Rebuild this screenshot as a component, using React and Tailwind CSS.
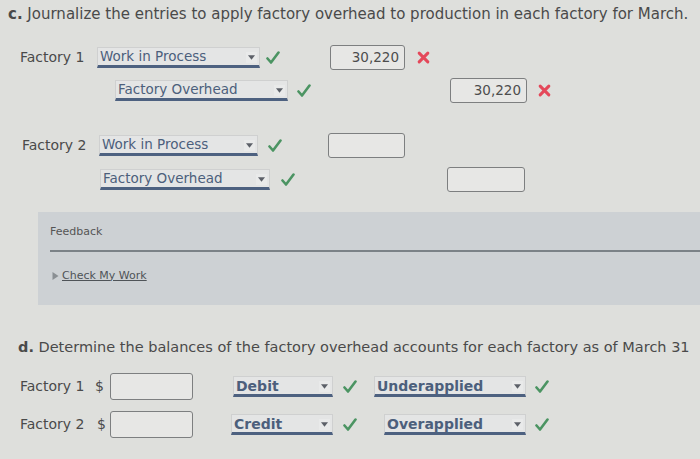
import React from 'react';

const font = "font-['DejaVu_Sans',Verdana,sans-serif]";

function Check({ className = '' }) {
  return (
    <svg viewBox="0 0 14 14" className={`w-[14px] h-[14px] shrink-0 ${className}`}>
      <path d="M1.5 7.5 L5 11.5 L12.5 1.5" fill="none" stroke="#4b9462" strokeWidth="2.6" strokeLinecap="round" strokeLinejoin="round" />
    </svg>
  );
}

function Cross({ className = '' }) {
  return (
    <svg viewBox="0 0 12 12" className={`w-[13px] h-[13px] shrink-0 ${className}`}>
      <path d="M2 2 L10 10 M10 2 L2 10" stroke="#e4485a" strokeWidth="2.8" strokeLinecap="round" />
    </svg>
  );
}

function Dropdown({ label, className = '', bold = false }) {
  return (
    <div className={`relative h-[21px] shrink-0 flex items-center bg-[#e4e5e5] border border-[#cfd0d0] border-b-[3px] border-b-[#4d6180] ${className}`}>
      <span className={`pl-[2px] leading-none text-[#4c5f7c] ${bold ? 'font-bold text-[14px]' : 'text-[13.5px]'}`}>{label}</span>
      <span className="absolute right-[2px] top-[4px] w-[11px] h-[11px] bg-[#e9eaea] flex items-center justify-center">
        <svg viewBox="0 0 8 5" className="w-[7px] h-[5px]">
          <path d="M0 0 L8 0 L4 5 Z" fill="#5c6068" />
        </svg>
      </span>
    </div>
  );
}

function Box({ value, className = '' }) {
  return (
    <div className={`h-[25px] shrink-0 border-[1.5px] border-[#7d7f80] rounded-[3px] bg-[#e7e7e5] flex items-center justify-end pr-[5px] text-[13.5px] text-[#4d4d4d] ${className}`}>
      {value}
    </div>
  );
}

export default function App() {
  return (
    <div className={`w-[700px] h-[459px] overflow-hidden bg-[#dedfdc] text-[#4a4a4a] ${font}`}>
      {/* part c */}
      <div className="h-[26px] pl-[8px] pt-[3px] text-[15px] whitespace-nowrap">
        <b>c.</b> Journalize the entries to apply factory overhead to production in each factory for March.
      </div>

      <div className="mt-[19px] h-[25px] flex items-center pl-[20px] text-[14px]">
        <span className="w-[77px] shrink-0">Factory 1</span>
        <Dropdown label="Work in Process" className="w-[163px]" />
        <Check className="ml-[6px]" />
        <Box value="30,220" className="ml-[50px] w-[75px]" />
        <Cross className="ml-[12px]" />
      </div>

      <div className="mt-[8px] h-[25px] flex items-center pl-[115px]">
        <Dropdown label="Factory Overhead" className="w-[173px]" />
        <Check className="ml-[9px]" />
        <Box value="30,220" className="ml-[139px] w-[77px]" />
        <Cross className="ml-[11px]" />
      </div>

      <div className="mt-[30px] h-[25px] flex items-center pl-[22px] text-[14px]">
        <span className="w-[77px] shrink-0">Factory 2</span>
        <Dropdown label="Work in Process" className="w-[159px]" />
        <Check className="ml-[10px]" />
        <Box className="ml-[46px] w-[77px]" />
      </div>

      <div className="mt-[9px] h-[25px] flex items-center pl-[100px]">
        <Dropdown label="Factory Overhead" className="w-[170px]" />
        <Check className="ml-[11px]" />
        <Box className="ml-[152px] w-[78px]" />
      </div>

      {/* feedback */}
      <div className="mt-[20px] ml-[38px] h-[93px] bg-[#cdd1d4] pl-[12px]">
        <div className="h-[38px] pt-[12px] text-[11px] text-[#555]">Feedback</div>
        <div className="h-[1.5px] bg-[#7b8287]" />
        <div className="mt-[16px] flex items-center text-[11px] text-[#4f5458]">
          <svg viewBox="0 0 6 8" className="w-[7px] h-[8px] ml-[2px] mr-[3px]">
            <path d="M0 0 L6 4 L0 8 Z" fill="#8a8f93" />
          </svg>
          <span className="underline">Check My Work</span>
        </div>
      </div>

      {/* part d */}
      <div className="mt-[31px] h-[24px] pl-[18px] flex items-center text-[14.5px] whitespace-nowrap">
        <b>d.</b>&nbsp;Determine the balances of the factory overhead accounts for each factory as of March 31
      </div>

      <div className="mt-[13px] h-[27px] flex items-center pl-[20px] text-[14px]">
        <span className="w-[75px] shrink-0">Factory 1</span>
        <span className="w-[15px] shrink-0">$</span>
        <Box className="w-[83px] h-[27px]" />
        <Dropdown label="Debit" bold className="ml-[40px] w-[100px]" />
        <Check className="ml-[10px]" />
        <Dropdown label="Underapplied" bold className="ml-[17px] w-[152px]" />
        <Check className="ml-[9px]" />
      </div>

      <div className="mt-[11px] h-[27px] flex items-center pl-[20px] text-[14px]">
        <span className="w-[77px] shrink-0">Factory 2</span>
        <span className="w-[13px] shrink-0">$</span>
        <Box className="w-[83px] h-[27px]" />
        <Dropdown label="Credit" bold className="ml-[38px] w-[102px]" />
        <Check className="ml-[10px]" />
        <Dropdown label="Overapplied" bold className="ml-[27px] w-[142px]" />
        <Check className="ml-[9px]" />
      </div>
    </div>
  );
}
